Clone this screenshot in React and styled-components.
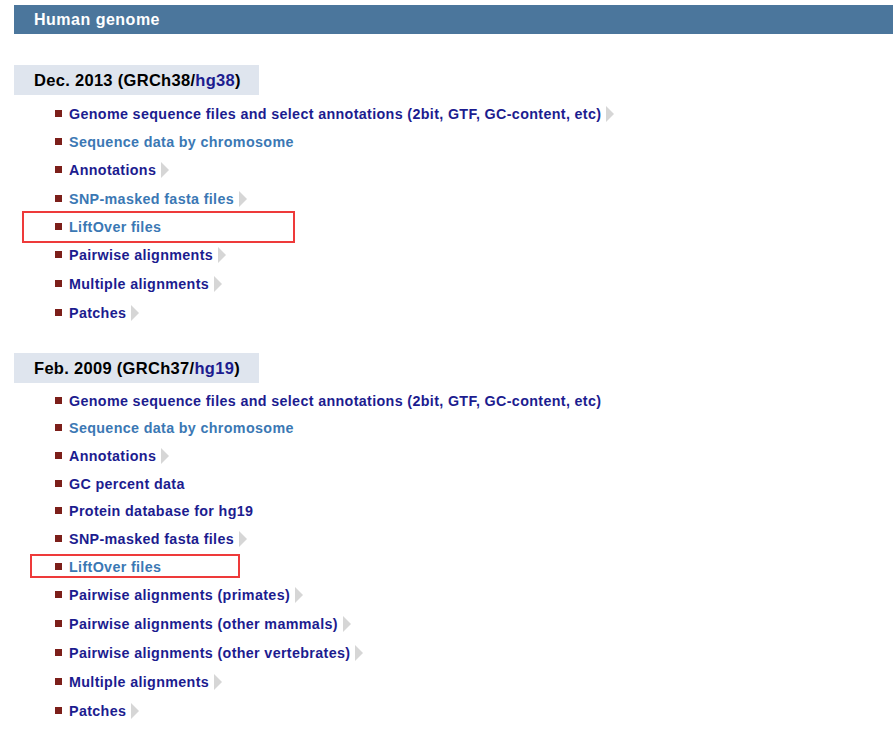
import React from "react";
import styled, { createGlobalStyle } from "styled-components";

const GlobalStyle = createGlobalStyle`
  body {
    margin: 0;
    background: #ffffff;
    font-family: "Liberation Sans", Arial, sans-serif;
  }
`;

const Page = styled.div`
  padding: 5px 0 20px 14px;
  overflow: hidden;
`;

const TitleBar = styled.div`
  background-color: #4b769c;
  color: #ffffff;
  font-weight: 700;
  font-size: 16px;
  letter-spacing: 0.5px;
  height: 29px;
  line-height: 29px;
  padding-left: 20px;
`;

const Section = styled.section`
  margin-top: ${(p) => p.$top}px;
`;

const Assembly = styled.div`
  display: inline-block;
  background-color: #dfe5ee;
  color: #000000;
  font-weight: 700;
  font-size: 16.5px;
  letter-spacing: 0.3px;
  height: 30px;
  line-height: 30px;
  width: 225px;
  padding-left: 20px;

  a {
    color: #1c1c8f;
    text-decoration: none;
  }
`;

const List = styled.ul`
  list-style: none;
  margin: 0;
  padding: 4px 0 0 41px;
`;

const Item = styled.li`
  position: relative;
  display: flex;
  align-items: center;
  height: ${(p) => (p.$arrow ? 29 : 27)}px;
  font-size: 14.3px;
  font-weight: 700;
`;

const Bullet = styled.span`
  width: 7px;
  height: 7px;
  background-color: #7c1f1a;
  margin-right: 7px;
  flex: none;
`;

const Link = styled.a`
  color: ${(p) => (p.$visited ? "#3b78b4" : "#1c1c8f")};
  text-decoration: none;
  letter-spacing: 0.35px;
`;

const Arrow = styled.span`
  width: 0;
  height: 0;
  margin-left: 5px;
  border-top: 8px solid transparent;
  border-bottom: 8px solid transparent;
  border-left: 8px solid #d6d6d6;
`;

const Highlight = styled.span`
  position: absolute;
  left: ${(p) => p.$left}px;
  top: ${(p) => p.$top}px;
  width: ${(p) => p.$width}px;
  height: ${(p) => p.$height}px;
  border: 2px solid #ee3a3a;
  box-sizing: border-box;
  pointer-events: none;
`;

const sections = [
  {
    top: 31,
    date: "Dec. 2013",
    build: "GRCh38",
    db: "hg38",
    items: [
      { label: "Genome sequence files and select annotations (2bit, GTF, GC-content, etc)", arrow: true },
      { label: "Sequence data by chromosome", visited: true },
      { label: "Annotations", arrow: true },
      { label: "SNP-masked fasta files", arrow: true, visited: true },
      { label: "LiftOver files", visited: true, box: { left: -33, top: -2, width: 273, height: 32 } },
      { label: "Pairwise alignments", arrow: true },
      { label: "Multiple alignments", arrow: true },
      { label: "Patches", arrow: true },
    ],
  },
  {
    top: 26,
    date: "Feb. 2009",
    build: "GRCh37",
    db: "hg19",
    items: [
      { label: "Genome sequence files and select annotations (2bit, GTF, GC-content, etc)" },
      { label: "Sequence data by chromosome", visited: true },
      { label: "Annotations", arrow: true },
      { label: "GC percent data" },
      { label: "Protein database for hg19" },
      { label: "SNP-masked fasta files", arrow: true },
      { label: "LiftOver files", visited: true, box: { left: -25, top: 1, width: 210, height: 24 } },
      { label: "Pairwise alignments (primates)", arrow: true },
      { label: "Pairwise alignments (other mammals)", arrow: true },
      { label: "Pairwise alignments (other vertebrates)", arrow: true },
      { label: "Multiple alignments", arrow: true },
      { label: "Patches", arrow: true },
    ],
  },
];

const App = () => {
  return (
    <>
      <GlobalStyle />
      <Page>
        <TitleBar>Human genome</TitleBar>
        {sections.map((s) => (
          <Section key={s.db} $top={s.top}>
            <Assembly>
              {s.date} ({s.build}/<a href="#">{s.db}</a>)
            </Assembly>
            <List>
              {s.items.map((it, i) => (
                <Item key={i} $arrow={it.arrow}>
                  {it.box && (
                    <Highlight
                      $left={it.box.left}
                      $top={it.box.top}
                      $width={it.box.width}
                      $height={it.box.height}
                    />
                  )}
                  <Bullet />
                  <Link href="#" $visited={it.visited}>
                    {it.label}
                  </Link>
                  {it.arrow && <Arrow />}
                </Item>
              ))}
            </List>
          </Section>
        ))}
      </Page>
    </>
  );
};

export default App;
